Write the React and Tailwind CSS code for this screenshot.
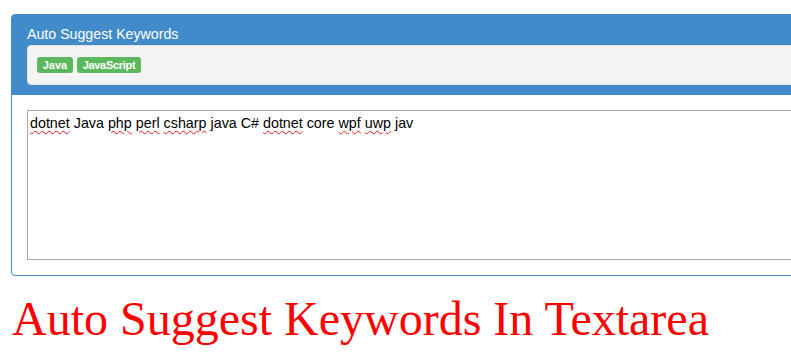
import React from "react";

const words = [
  ["dotnet", true],
  ["Java", false],
  ["php", true],
  ["perl", true],
  ["csharp", true],
  ["java", false],
  ["C#", false],
  ["dotnet", true],
  ["core", false],
  ["wpf", true],
  ["uwp", true],
  ["jav", false],
];

export default function App() {
  return (
    <div className="w-[791px] h-[359px] overflow-hidden bg-white" style={{ fontFamily: '"Liberation Sans", Arial, sans-serif' }}>
      <div className="pt-[14px] pl-[11px]">
        <div className="w-[820px] border border-[#428bca] rounded-[4px] bg-white">
          <div className="bg-[#428bca] px-[15px] pt-[9px] pb-[10px]">
            <div className="text-white text-[14.2px] leading-[20px]">Auto Suggest Keywords</div>
            <div className="mt-[1px] h-[40px] bg-[#f4f4f4] border border-[#e3e3e3] rounded-[4px] flex items-center gap-[4px] pl-[9px]">
              <span className="w-[36px] h-[16px] flex items-center justify-center bg-[#5cb85c] text-white font-bold text-[11px] rounded-[3px]">Java</span>
              <span className="w-[64px] h-[16px] flex items-center justify-center bg-[#5cb85c] text-white font-bold text-[11px] rounded-[3px] tracking-[-0.3px]">JavaScript</span>
            </div>
          </div>
          <div className="p-[15px]">
            <div className="h-[150px] border border-[#a9a9a9] p-[2px] text-[14.3px] leading-[20px] text-black">
              {words.map(([w, bad], i) => (
                <React.Fragment key={i}>
                  {bad ? (
                    <span className="underline decoration-wavy decoration-[#e41b1b] decoration-1 underline-offset-[2px]">{w}</span>
                  ) : (
                    <span>{w}</span>
                  )}
                  {i < words.length - 1 ? " " : ""}
                </React.Fragment>
              ))}
            </div>
          </div>
        </div>
      </div>
      <h1
        className="ml-[12px] mt-[19px] text-[48px] leading-[48px] text-[#ff0000] font-normal whitespace-nowrap"
        style={{ fontFamily: '"Liberation Serif", "Times New Roman", serif' }}
      >
        Auto Suggest Keywords In Textarea
      </h1>
    </div>
  );
}
